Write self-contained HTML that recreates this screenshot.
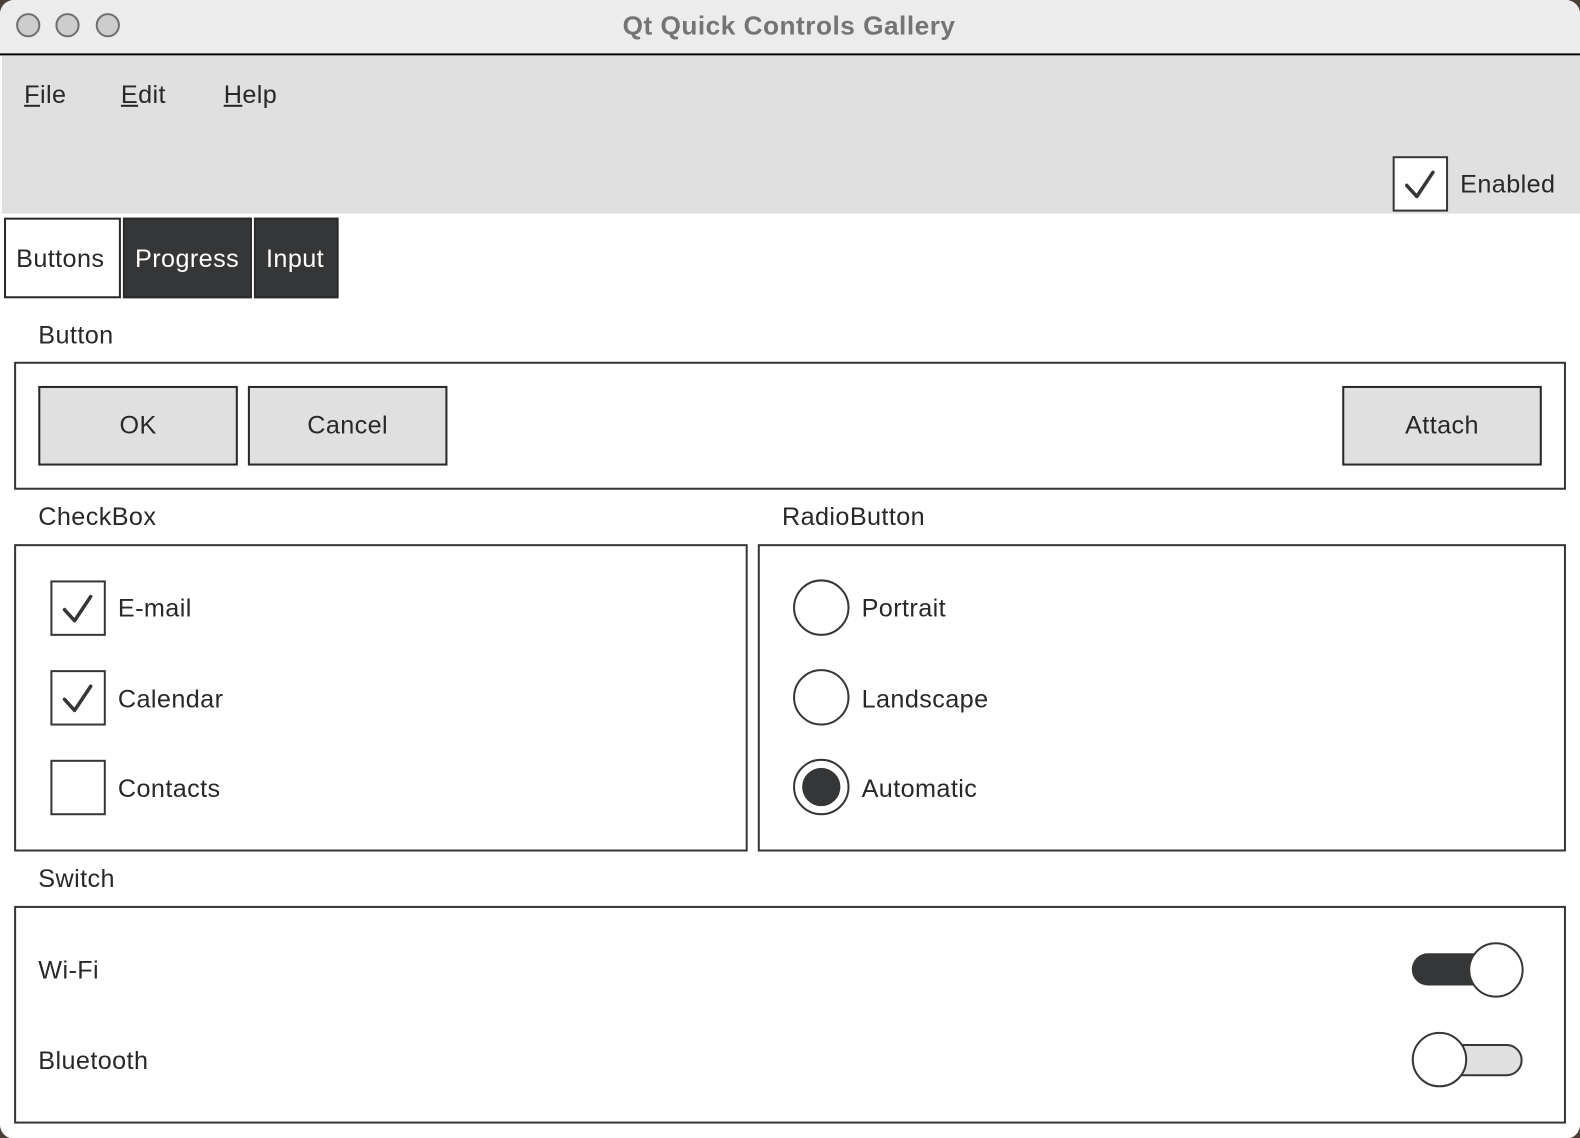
<!DOCTYPE html>
<html><head><meta charset="utf-8"><style>
*{margin:0;padding:0;box-sizing:border-box}
html,body{width:1580px;height:1138px;overflow:hidden;background:#4a3f33}
body{font-family:"Liberation Sans",sans-serif;color:#26282a;position:relative}
.win{position:absolute;left:0;top:0;width:1568px;height:1130px;background:#fff;border-radius:14px;overflow:hidden;transform:scale(1.0077);transform-origin:0 0}
.a{position:absolute}
.t{position:absolute;font-size:25px;line-height:1;white-space:nowrap;letter-spacing:0.4px}
.frame{position:absolute;border:2px solid #353637}
.btn{position:absolute;border:2px solid #26282a;background:#e0e0e0;font-size:25px;letter-spacing:0.4px;display:flex;align-items:center;justify-content:center}
.cb{position:absolute;width:55px;height:55px;border:2px solid #353637;background:#fff}
.rb{position:absolute;width:56px;height:56px;border:2px solid #353637;border-radius:50%;background:#fff}
.tl{position:absolute;top:13px;width:24px;height:24px;border-radius:50%;background:#cdcdcd;border:2px solid #6f6f6f}
</style></head><body><div class="win">
<div class="a" style="left:0;top:0;width:1580px;height:53px;background:#ececec"></div>
<div class="a" style="left:0;top:53px;width:1580px;height:2px;background:#000"></div>
<div class="tl" style="left:16px"></div><div class="tl" style="left:55px"></div><div class="tl" style="left:95px"></div>
<div class="t" style="left:0;width:1566px;text-align:center;top:12px;font-weight:bold;color:#747474;font-size:26px;letter-spacing:0.5px">Qt Quick Controls Gallery</div>
<div class="a" style="left:2px;top:55px;width:1574px;height:157px;background:#e0e0e0"></div>
<div class="t" style="left:24px;top:82px"><u>F</u>ile</div>
<div class="t" style="left:120px;top:82px"><u>E</u>dit</div>
<div class="t" style="left:222px;top:82px"><u>H</u>elp</div>
<div class="cb" style="left:1382px;top:155px"><svg width="51" height="51"><path d="M12 27 L22 38 L38 14" fill="none" stroke="#353637" stroke-width="3.5" stroke-linecap="round" stroke-linejoin="round"/></svg></div>
<div class="t" style="left:1449px;top:171px">Enabled</div>
<div class="a" style="left:4px;top:216px;width:116px;height:80px;border:2px solid #26282a;background:#fff"></div>
<div class="t" style="left:16px;top:245px">Buttons</div>
<div class="a" style="left:122px;top:216px;width:128px;height:80px;background:#353637;border:2px solid #2a2b2c"></div>
<div class="t" style="left:134px;top:245px;color:#fff">Progress</div>
<div class="a" style="left:252px;top:216px;width:84px;height:80px;background:#353637;border:2px solid #2a2b2c"></div>
<div class="t" style="left:264px;top:245px;color:#fff">Input</div>
<div class="t" style="left:38px;top:321px">Button</div>
<div class="frame" style="left:14px;top:359px;width:1540px;height:127px"></div>
<div class="btn" style="left:38px;top:383px;width:198px;height:79px">OK</div>
<div class="btn" style="left:246px;top:383px;width:198px;height:79px">Cancel</div>
<div class="btn" style="left:1332px;top:383px;width:198px;height:79px">Attach</div>
<div class="t" style="left:38px;top:501px">CheckBox</div>
<div class="t" style="left:776px;top:501px">RadioButton</div>
<div class="frame" style="left:14px;top:540px;width:728px;height:305px"></div>
<div class="frame" style="left:752px;top:540px;width:802px;height:305px"></div>
<div class="cb" style="left:50px;top:576px"><svg width="51" height="51"><path d="M12 27 L22 38 L38 14" fill="none" stroke="#353637" stroke-width="3.5" stroke-linecap="round" stroke-linejoin="round"/></svg></div>
<div class="t" style="left:117px;top:592px">E-mail</div>
<div class="cb" style="left:50px;top:665px"><svg width="51" height="51"><path d="M12 27 L22 38 L38 14" fill="none" stroke="#353637" stroke-width="3.5" stroke-linecap="round" stroke-linejoin="round"/></svg></div>
<div class="t" style="left:117px;top:682px">Calendar</div>
<div class="cb" style="left:50px;top:754px"></div>
<div class="t" style="left:117px;top:771px">Contacts</div>
<div class="rb" style="left:787px;top:575px"></div>
<div class="t" style="left:855px;top:592px">Portrait</div>
<div class="rb" style="left:787px;top:664px"></div>
<div class="t" style="left:855px;top:682px">Landscape</div>
<div class="rb" style="left:787px;top:753px"><div class="a" style="left:7px;top:7px;width:38px;height:38px;border-radius:50%;background:#353637"></div></div>
<div class="t" style="left:855px;top:771px">Automatic</div>
<div class="t" style="left:38px;top:860px">Switch</div>
<div class="frame" style="left:14px;top:899px;width:1540px;height:216px"></div>
<div class="t" style="left:38px;top:951px">Wi-Fi</div>
<div class="t" style="left:38px;top:1041px">Bluetooth</div>
<div class="a" style="left:1401px;top:946px;width:110px;height:32px;border-radius:16px;background:#353637"></div>
<div class="a" style="left:1457px;top:935px;width:55px;height:55px;border-radius:50%;background:#fff;border:2px solid #353637"></div>
<div class="a" style="left:1401px;top:1036px;width:110px;height:32px;border-radius:16px;background:#e0e0e0;border:2px solid #353637"></div>
<div class="a" style="left:1401px;top:1024px;width:55px;height:55px;border-radius:50%;background:#fff;border:2px solid #353637"></div>
</div></body></html>
